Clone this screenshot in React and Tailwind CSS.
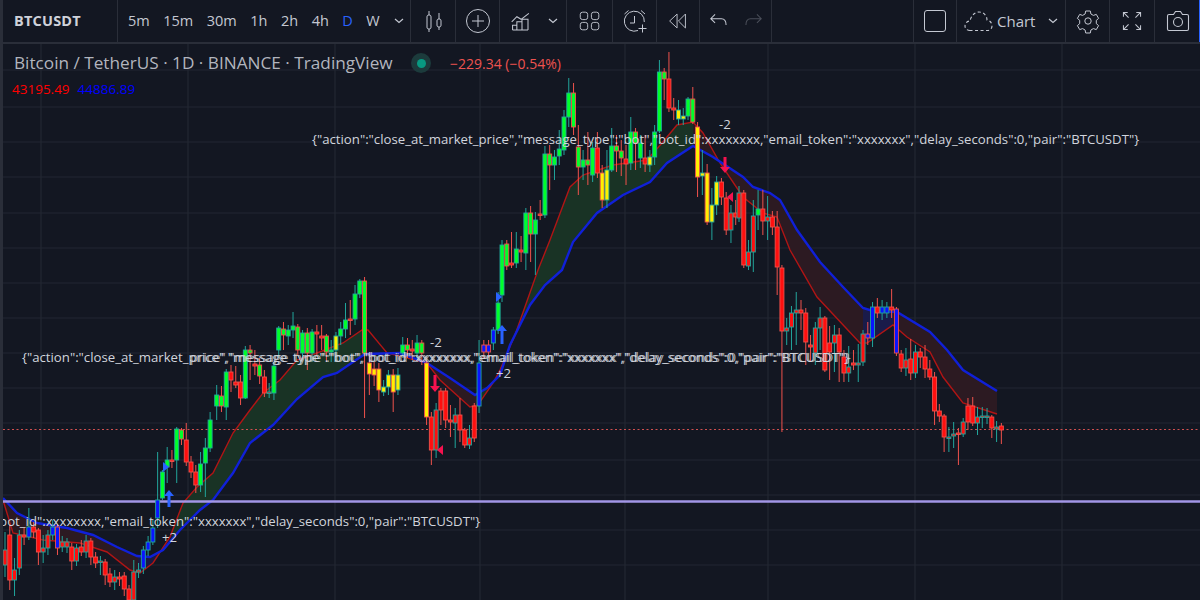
const FONT = "font-['Open_Sans',sans-serif]";

// candle rows: [bodyTop, bodyBottom, wickTop, wickBottom, kind]
// g green/teal, G green/red, r red/red, R red/teal, y yellow/red, Y yellow/teal, b blue/teal, B blue/red
const SEGMENTS = [
  {
    x0: 5,
    rows: [
      [550, 565, 532, 577, "R"], [535, 580, 525, 590, "r"], [570, 580, 558, 596, "R"], [535, 568, 530, 575, "R"],
      [535, 537, 528, 545, "r"], [527, 537, 508, 540, "b"], [527, 532, 522, 538, "r"], [530, 552, 528, 565, "r"],
      [548, 552, 535, 563, "R"], [535, 548, 530, 555, "R"], [527, 535, 520, 540, "b"], [527, 548, 524, 555, "B"],
      [542, 547, 536, 552, "R"], [542, 547, 538, 553, "R"], [547, 561, 543, 570, "r"], [548, 561, 544, 566, "R"],
      [547, 552, 540, 556, "r"], [541, 552, 535, 558, "R"], [541, 557, 538, 565, "r"], [557, 563, 552, 568, "r"],
      [561, 562, 556, 575, "R"], [562, 575, 559, 585, "r"], [574, 582, 568, 587, "r"], [577, 582, 570, 590, "R"],
      [577, 579, 572, 586, "r"], [576, 589, 572, 596, "r"], [589, 600, 585, 600, "r"], [572, 600, 560, 600, "R"],
      [570, 572, 563, 578, "R"], [550, 568, 546, 574, "b"], [542, 550, 536, 556, "b"], [528, 542, 520, 545, "b"],
      [500, 518, 452, 528, "b"], [472, 498, 470, 500, "g"], [460, 467, 447, 483, "g"], [460, 461, 450, 468, "r"],
      [429, 460, 427, 483, "g"], [430, 439, 428, 445, "G"], [440, 462, 423, 466, "r"], [462, 472, 456, 478, "r"],
      [472, 485, 465, 493, "r"], [464, 485, 452, 492, "g"], [448, 463, 438, 497, "g"], [420, 448, 412, 452, "g"],
    ],
  },
  {
    x0: 216.7,
    rows: [
      [395, 406, 385, 420, "g"], [396, 406, 386, 412, "G"], [372, 407, 369, 420, "g"], [372, 380, 365, 392, "r"],
      [382, 385, 366, 388, "r"], [382, 398, 375, 405, "r"], [350, 398, 346, 399, "g"], [350, 353, 345, 380, "G"],
      [364, 366, 350, 375, "r"], [365, 376, 358, 384, "G"], [377, 393, 370, 397, "r"], [392, 393, 383, 398, "R"],
      [366, 393, 362, 400, "g"], [328, 350, 326, 358, "g"], [329, 335, 322, 350, "G"], [330, 336, 325, 345, "g"],
      [326, 330, 312, 338, "g"], [327, 350, 324, 356, "G"], [333, 353, 330, 360, "g"], [333, 353, 328, 370, "G"],
      [332, 353, 329, 362, "g"], [332, 334, 325, 355, "r"], [336, 338, 325, 350, "r"], [336, 352, 334, 362, "G"],
      [350, 352, 340, 362, "g"], [336, 350, 332, 362, "Y"], [329, 336, 322, 345, "g"], [320, 329, 303, 338, "g"],
      [319, 320, 300, 335, "r"], [294, 319, 285, 325, "g"], [281, 294, 279, 298, "g"], [281, 353, 277, 418, "G"],
      [363, 374, 354, 395, "y"], [369, 375, 362, 386, "y"], [369, 390, 363, 402, "y"], [387, 392, 380, 396, "Y"],
      [375, 387, 370, 395, "Y"], [375, 392, 369, 412, "y"], [375, 390, 368, 395, "Y"], [345, 353, 337, 358, "g"],
      [345, 350, 338, 358, "G"], [349, 351, 340, 360, "r"], [343, 353, 335, 358, "g"], [343, 353, 340, 365, "G"],
      [363, 417, 358, 425, "y"], [417, 450, 412, 465, "r"], [410, 450, 403, 458, "R"], [391, 410, 388, 425, "r"],
      [391, 420, 388, 428, "r"], [420, 422, 405, 437, "r"], [415, 423, 408, 448, "R"], [415, 430, 398, 442, "r"],
      [430, 445, 428, 448, "r"], [438, 445, 425, 449, "R"], [406, 438, 403, 442, "r"], [363, 406, 340, 413, "b"],
      [345, 352, 340, 358, "B"], [345, 352, 340, 358, "B"], [330, 343, 327, 350, "b"], [303, 330, 292, 334, "g"],
    ],
  },
  {
    x0: 502,
    rows: [
      [245, 295, 240, 302, "g"], [244, 266, 240, 270, "G"], [263, 265, 232, 268, "r"], [249, 263, 232, 268, "g"],
      [250, 252, 236, 262, "r"], [213, 253, 208, 270, "g"], [213, 234, 206, 262, "G"], [220, 234, 212, 275, "g"],
      [214, 215, 200, 220, "r"], [154, 215, 146, 218, "g"], [154, 165, 145, 190, "G"], [157, 165, 150, 180, "g"],
      [149, 156, 130, 165, "g"], [117, 150, 110, 155, "g"], [93, 117, 78, 127, "g"], [93, 127, 83, 135, "G"],
      [147, 167, 125, 195, "G"], [160, 167, 150, 180, "g"], [160, 165, 132, 185, "G"], [148, 175, 142, 182, "g"],
      [148, 173, 132, 178, "r"], [173, 200, 165, 208, "y"], [170, 200, 150, 208, "Y"], [146, 170, 128, 172, "g"],
      [146, 151, 135, 172, "G"], [151, 158, 140, 176, "G"], [159, 164, 145, 185, "r"], [132, 163, 117, 170, "g"],
      [132, 143, 128, 170, "G"], [143, 158, 135, 168, "g"], [158, 164, 135, 172, "r"], [157, 165, 150, 172, "Y"],
      [132, 157, 125, 165, "g"], [72, 131, 60, 133, "g"], [72, 79, 68, 100, "G"], [79, 108, 52, 112, "r"],
      [108, 110, 98, 120, "r"], [110, 119, 100, 125, "Y"], [116, 119, 108, 125, "Y"], [99, 116, 97, 120, "g"],
      [99, 122, 87, 124, "G"], [127, 177, 122, 197, "y"], [173, 176, 150, 195, "Y"], [173, 222, 164, 225, "y"],
      [205, 222, 188, 240, "Y"], [182, 205, 176, 215, "Y"], [182, 197, 178, 205, "r"], [198, 230, 192, 235, "r"],
      [213, 230, 205, 243, "R"], [213, 217, 200, 225, "r"],
    ],
  },
  {
    x0: 739,
    rows: [
      [193, 218, 186, 222, "R"], [193, 265, 190, 268, "r"], [252, 266, 240, 270, "R"], [216, 252, 200, 272, "R"],
      [209, 215, 190, 230, "g"], [209, 221, 190, 235, "r"], [217, 221, 196, 240, "R"], [217, 227, 211, 235, "r"],
      [227, 267, 211, 295, "r"], [268, 331, 265, 432, "r"], [328, 331, 318, 345, "R"], [313, 327, 306, 350, "R"],
      [310, 313, 292, 345, "R"], [310, 313, 300, 330, "r"], [313, 342, 308, 365, "r"], [345, 347, 335, 362, "r"],
      [328, 353, 322, 365, "R"], [318, 328, 307, 350, "R"], [318, 370, 316, 372, "r"], [343, 352, 326, 380, "r"],
      [335, 343, 325, 372, "R"], [335, 352, 328, 382, "r"], [357, 373, 350, 382, "r"], [367, 373, 346, 382, "R"],
      [363, 365, 350, 370, "r"], [363, 365, 344, 382, "R"], [334, 362, 330, 366, "R"], [334, 338, 322, 345, "B"],
      [307, 338, 302, 347, "b"], [307, 313, 298, 318, "r"], [307, 313, 300, 320, "b"], [307, 313, 302, 318, "b"],
      [307, 310, 289, 318, "r"], [309, 353, 307, 356, "B"], [354, 368, 350, 372, "r"], [360, 368, 348, 376, "R"],
      [359, 373, 339, 380, "r"], [352, 373, 345, 378, "R"], [352, 357, 348, 368, "r"], [357, 369, 345, 378, "r"],
      [369, 377, 360, 380, "r"], [377, 411, 372, 425, "r"], [411, 416, 404, 422, "r"], [416, 437, 414, 452, "r"],
      [437, 438, 427, 452, "R"], [434, 436, 422, 448, "R"], [433, 434, 428, 465, "r"], [422, 434, 418, 437, "R"],
      [406, 422, 398, 430, "r"], [406, 423, 397, 426, "r"], [417, 423, 407, 435, "R"], [416, 417, 407, 428, "R"],
      [416, 417, 408, 424, "R"], [417, 428, 415, 438, "r"], [427, 429, 421, 442, "R"], [426, 430, 423, 444, "r"],
    ],
  },
];

const CANDLE_STYLE = {
  g: ["#00ff2a", "#22a69c"], G: ["#00ff2a", "#f0524c"],
  r: ["#ff0f0f", "#f0524c"], R: ["#ff0f0f", "#22a69c"],
  y: ["#fff000", "#f0524c"], Y: ["#fff000", "#22a69c"],
  b: ["#0a14ff", "#22a69c"], B: ["#0a14ff", "#f0524c"],
};

const BLUE = [
  [3, 498], [17, 513], [37, 523], [67, 528], [93, 535], [117, 547], [137, 556], [150, 557], [163, 550], [180, 530],
  [200, 510], [213, 500], [233, 473], [250, 443], [273, 425], [297, 399], [323, 377], [337, 373], [353, 362], [365, 354],
  [400, 353], [427, 363], [450, 378], [475, 395], [487, 388], [500, 375], [510, 345], [530, 305], [545, 285], [562, 270],
  [573, 242], [597, 213], [623, 195], [650, 182], [667, 163], [693, 146], [713, 157], [743, 177], [753, 187], [770, 193],
  [780, 200], [797, 230], [820, 262], [843, 287], [863, 308], [873, 311], [897, 312], [930, 332], [947, 350], [963, 370], [997, 391],
];

const RED = [
  [3, 500], [13, 533], [43, 540], [80, 543], [107, 552], [130, 570], [140, 573], [153, 563], [170, 537], [183, 503],
  [197, 487], [213, 473], [233, 433], [250, 410], [263, 393], [280, 380], [297, 360], [317, 353], [343, 343], [362, 330],
  [368, 330], [387, 353], [427, 363], [440, 380], [470, 407], [478, 405], [493, 383], [500, 370], [515, 335], [538, 270],
  [550, 240], [570, 187], [583, 175], [613, 165], [647, 160], [662, 143], [677, 125], [693, 122], [703, 133], [720, 163],
  [743, 197], [763, 213], [777, 217], [790, 250], [817, 297], [860, 343], [867, 343], [893, 325], [907, 337], [930, 352],
  [943, 377], [963, 403], [997, 414],
];

const BANDS = [
  [3, 138, "#2c1a22"], [138, 172, "#1a1b42"], [172, 363, "#193325"], [427, 478, "#2c1a22"], [478, 693, "#193325"],
  [693, 863, "#2c1a22"], [863, 893, "#1a1b4a"], [893, 997, "#2c1a22"],
];

const GRID_X = [41, 188, 335, 480, 625, 768, 915, 1062];
const GRID_Y = [70, 107, 142, 177, 213, 248, 283, 318, 353, 388, 423, 460, 495, 530, 565];

const ALERT =
  '{"action":"close_at_market_price","message_type":"bot","bot_id":xxxxxxxx,"email_token":"xxxxxxx","delay_seconds":0,"pair":"BTCUSDT"}';
const ALERT_TAIL =
  'price","message_type":"bot","bot_id":xxxxxxxx,"email_token":"xxxxxxx","delay_seconds":0,"pair":"BTCUSDT"}';

const toPoints = (list) => list.map((p) => p.join(",")).join(" ");

function lineY(list, x) {
  for (let i = 1; i < list.length; i++) {
    if (x <= list[i][0]) {
      const [x1, y1] = list[i - 1];
      const [x2, y2] = list[i];
      return y1 + ((y2 - y1) * (x - x1)) / (x2 - x1);
    }
  }
  return list[list.length - 1][1];
}

function bandPoints(from, to) {
  const xs = [];
  for (let x = from; x < to; x += 3) xs.push(x);
  xs.push(to);
  const top = xs.map((x) => [x, lineY(BLUE, x)]);
  const bottom = xs.map((x) => [x, lineY(RED, x)]).reverse();
  return toPoints([...top, ...bottom]);
}

function Candle({ x, row }) {
  const [top, bottom, wickTop, wickBottom, kind] = row;
  const [fill, edge] = CANDLE_STYLE[kind];
  return (
    <g>
      <line x1={x} x2={x} y1={wickTop} y2={wickBottom} stroke={edge} strokeWidth="1" />
      <rect x={x - 2} y={top} width="4" height={Math.max(bottom - top, 1.5)} fill={fill} stroke={edge} strokeWidth="0.9" />
    </g>
  );
}

function Chart() {
  return (
    <svg viewBox="0 44 1200 556" className="block w-full h-full">
      {GRID_X.map((x) => (
        <line key={x} x1={x} x2={x} y1="44" y2="600" stroke="#232733" strokeWidth="1.2" />
      ))}
      {GRID_Y.map((y) => (
        <line key={y} x1="3" x2="1200" y1={y} y2={y} stroke="#232733" strokeWidth="1.2" />
      ))}
      {BANDS.map(([from, to, fill]) => (
        <polygon key={from} points={bandPoints(from, to)} fill={fill} />
      ))}
      <polyline points={toPoints(RED)} fill="none" stroke="#b01515" strokeWidth="1.4" />
      <polyline points={toPoints(BLUE)} fill="none" stroke="#1020d8" strokeWidth="2.4" />
      <line x1="3" x2="1200" y1="429.5" y2="429.5" stroke="#d05050" strokeWidth="1.2" strokeDasharray="2 2.500" />
      <line x1="3" x2="1200" y1="501.5" y2="501.5" stroke="#a296e6" strokeWidth="2.5" />
      {SEGMENTS.map((seg) =>
        seg.rows.map((row, i) => <Candle key={seg.x0 + "-" + i} x={seg.x0 + i * 4.77} row={row} />)
      )}
      <path d="M169 490l5 6h-3.500v11h-3v-11H164z" fill="#2962ff" />
      <path d="M502 325l5 6h-3.500v13h-3v-13H497z" fill="#2962ff" />
      <path d="M163 462l6 5-6 5z" fill="#2962ff" />
      <path d="M496 292l6 5-6 5z" fill="#2962ff" />
      <path d="M725 173l-5-6h3.500v-10h3v10h3.500z" fill="#f5124f" />
      <path d="M435 392l-5-6h3.500v-11h3v11h3.500z" fill="#f5124f" />
      <path d="M733 192l-6 5 6 5z" fill="#f5124f" />
      <path d="M443 445l-6 5 6 5z" fill="#f5124f" />
    </svg>
  );
}

function Cell({ className = "w-[44px]", children }) {
  return (
    <div className={"flex items-center justify-center h-full border-r border-[#2a2e39] shrink-0 " + className}>
      {children}
    </div>
  );
}

function Icon({ size = 28, children, className = "" }) {
  return (
    <svg width={size} height={size} viewBox="0 0 28 28" fill="none" stroke="currentColor" strokeWidth="1" className={className}>
      {children}
    </svg>
  );
}

function Chevron({ className = "" }) {
  return (
    <svg width="10" height="6" viewBox="0 0 10 6" fill="none" stroke="currentColor" strokeWidth="1.2" className={className}>
      <path d="M1 1l4 3.500 4-3.500" />
    </svg>
  );
}

function Toolbar() {
  return (
    <div className={"flex h-[44px] border-b-2 border-[#2a2e39] border-l-[3px] text-[#c4c8d2] bg-[#131722] " + FONT}>
      <Cell className="w-[115px] justify-start pl-[11px]">
        <span className="text-[14.500px] font-bold text-[#cfd2da] tracking-[0.2px]">BTCUSDT</span>
      </Cell>
      <Cell className="w-[293px] justify-start pl-[10px]">
        <div className="flex items-center gap-[13.500px] text-[14.500px]">
          <span>5m</span>
          <span>15m</span>
          <span>30m</span>
          <span>1h</span>
          <span>2h</span>
          <span>4h</span>
          <span className="text-[#2962ff]">D</span>
          <span>W</span>
          <Chevron className="ml-[1px]" />
        </div>
      </Cell>
      <Cell className="w-[45px] pl-[2px]">
        <Icon size={28}>
          <path d="M9 4v4M9 25v-3M9 8c-1.500 0-2 .5-2 2v10c0 1.500.5 2 2 2s2-.5 2-2V10c0-1.500-.5-2-2-2z" />
          <path d="M19 6v6M19 23v-3M19 12c-1.500 0-2 .5-2 2v4c0 1.500.5 2 2 2s2-.5 2-2v-4c0-1.500-.5-2-2-2z" />
        </Icon>
      </Cell>
      <Cell className="w-[44px]">
        <Icon size={28}>
          <circle cx="14" cy="14" r="11.500" />
          <path d="M14 8v12M8 14h12" />
        </Icon>
      </Cell>
      <Cell className="w-[67px] gap-[14px] pl-[2px]">
        <Icon size={24}>
          <path d="M2 15l6-6 5 3 9-7" strokeWidth="1.200" />
          <path d="M3 24.500V19h5v5.500M8 24.500V15h6v9.500M14 24.500V12h7v12.500M3 24.500h18" strokeWidth="1.200" />
        </Icon>
        <Chevron />
      </Cell>
      <Cell className="w-[46px]">
        <Icon size={26}>
          <rect x="3.500" y="4.500" width="8" height="8" rx="2.500" />
          <rect x="15.500" y="4.500" width="8" height="8" rx="2.500" />
          <rect x="3.500" y="15.500" width="8" height="8" rx="2.500" />
          <rect x="15.500" y="15.500" width="8" height="8" rx="2.500" />
        </Icon>
      </Cell>
      <Cell className="w-[44px]">
        <Icon size={28}>
          <path d="M17 23.500A10 10 0 1 1 23.300 15" />
          <path d="M13.500 9v7H9M3.500 7l4-3.500M24 7l-4-3.500" />
          <path d="M21.500 17.500v8M17.500 21.500h8" />
        </Icon>
      </Cell>
      <Cell className="w-[43px]">
        <Icon size={26}>
          <path d="M13 6.500v15L5 14zM22 6.500v15L14.500 14z" />
        </Icon>
      </Cell>
      <Cell className="w-[72px] gap-[12px]">
        <Icon size={22}>
          <path d="M9 5.500L3.500 11 9 16.500M4 11h13c4 0 6 3 6 8" strokeWidth="1.300" />
        </Icon>
        <Icon size={22} className="text-[#4a4e59]">
          <path d="M19 5.500l5.500 5.500-5.500 5.500M24 11H11c-4 0-6 3-6 8" strokeWidth="1.300" />
        </Icon>
      </Cell>
      <div className="flex-1" />
      <Cell className="w-[44px] border-l">
        <div className="w-[22px] h-[22px] rounded-[3px] border border-[#c4c8d2]" />
      </Cell>
      <Cell className="w-[109px] justify-start pl-[7px]">
        <svg width="29" height="22" viewBox="0 0 29 22" fill="none" stroke="currentColor" strokeWidth="1.100" strokeDasharray="3 2.500">
          <path d="M6 20.500C2.500 20.500 1 18 1 16c0-3 2.500-5 5-5 1-5 4.500-9 9-9 5 0 8 4 8 8 3 .5 5 3 5 6 0 2.500-2 4.500-4.500 4.500z" />
        </svg>
        <span className="ml-[4px] text-[15px]">Chart</span>
        <Chevron className="ml-[13px]" />
      </Cell>
      <Cell className="w-[44px]">
        <svg width="24" height="26" viewBox="0 0 24 24" fill="none" stroke="currentColor" strokeWidth="1">
          <path d="M9.700 2h4.600l.6 3 2.500 1.400 2.900-1 2.300 4-2.300 2v3.200l2.300 2-2.300 4-2.900-1-2.500 1.400-.6 3H9.700l-.6-3-2.500-1.400-2.900 1-2.300-4 2.300-2v-3.200l-2.300-2 2.300-4 2.900 1L9.100 5z" />
          <circle cx="12" cy="12" r="3.200" />
        </svg>
      </Cell>
      <Cell className="w-[45px]">
        <Icon size={24}>
          <path d="M9 4H4v5M4 4l6 6M19 4h5v5M24 4l-6 6M9 24H4v-5M4 24l6-6M19 24h5v-5M24 24l-6-6" strokeWidth="1.200" />
        </Icon>
      </Cell>
      <Cell className="w-[45px] border-r-0 relative">
        <svg width="26" height="24" viewBox="0 0 26 24" fill="none" stroke="currentColor" strokeWidth="1.100">
          <path d="M2.500 7c0-1 .5-1.500 1.500-1.500h4.500l2-3h5l2 3H22c1 0 1.500.5 1.500 1.500v13c0 1-.5 1.500-1.500 1.500H4c-1 0-1.500-.5-1.500-1.500z" />
          <circle cx="13" cy="13" r="4.500" />
        </svg>
        <div className="absolute right-0 top-0 h-full w-px bg-[#2962ff]" />
      </Cell>
    </div>
  );
}

function Legend() {
  return (
    <div className="absolute left-[11px] top-[8px]">
      <div className="flex items-center h-[22px]">
        <span className="text-[17.200px] text-[#b2b5be] whitespace-nowrap w-[397px]">
          Bitcoin / TetherUS · 1D · BINANCE · TradingView
        </span>
        <span className="w-[20px] h-[20px] rounded-full bg-[#1c3b3c] flex items-center justify-center">
          <span className="w-[9px] h-[9px] rounded-full bg-[#089981]" />
        </span>
        <span className="ml-[19px] text-[14px] text-[#ee5350]">−229.34 (−0.54%)</span>
      </div>
      <div className="flex gap-[8px] -ml-[2px] mt-[6px] text-[13.500px] leading-[18px]">
        <span className="text-[#ff0000]">43195.49</span>
        <span className="text-[#0000ff]">44886.89</span>
      </div>
    </div>
  );
}

function Label({ className, children }) {
  return (
    <span className={"absolute whitespace-nowrap text-[13.200px] leading-none text-[#d1d4dc] " + className}>{children}</span>
  );
}

export default function App() {
  return (
    <div className={"flex flex-col w-[1200px] h-[600px] overflow-hidden bg-[#131722] " + FONT}>
      <Toolbar />
      <div className="relative flex-1 min-h-0 overflow-hidden border-l-[3px] border-[#2a2e39]">
        <div className="absolute inset-y-0 left-[-3px] w-[1200px]">
          <Chart />
        </div>
        <Legend />
        <Label className="left-[309px] top-[89px]">{ALERT}</Label>
        <Label className="left-[19px] top-[307px]">{ALERT}</Label>
        <Label className="left-[187px] top-[307px] opacity-80">{ALERT_TAIL}</Label>
        <Label className="left-[-350px] top-[471px]">{ALERT}</Label>
        <Label className="left-[716px] top-[74px]">-2</Label>
        <Label className="left-[427px] top-[292px]">-2</Label>
        <Label className="left-[493px] top-[323px]">+2</Label>
        <Label className="left-[159px] top-[487px]">+2</Label>
      </div>
    </div>
  );
}
